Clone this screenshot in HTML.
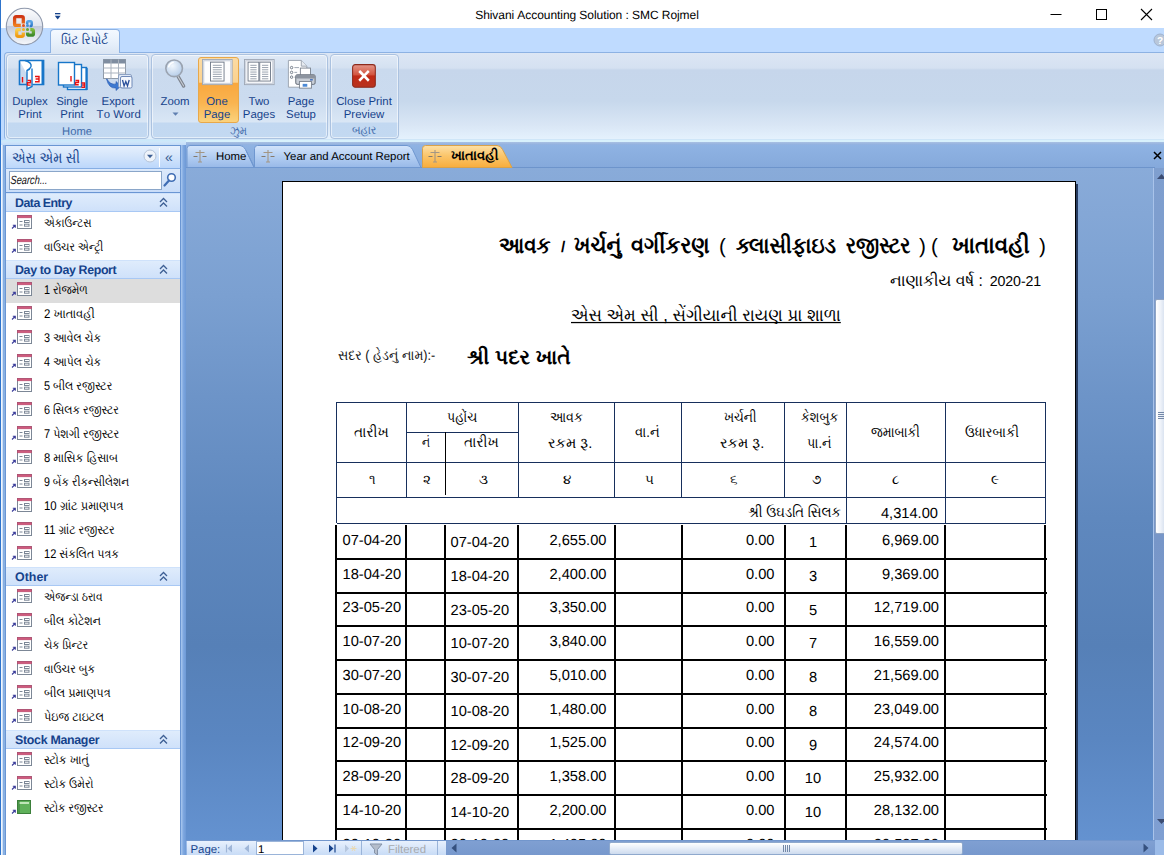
<!DOCTYPE html>
<html><head><meta charset="utf-8"><title>Shivani Accounting Solution : SMC Rojmel</title><style>
html,body{margin:0;padding:0;background:#fff;}
body{width:1164px;height:855px;overflow:hidden;font-family:"Liberation Sans",sans-serif;}
#root{position:relative;width:1164px;height:855px;overflow:hidden;background:#fff;text-rendering:geometricPrecision;}
#root div,#root svg{position:absolute;box-sizing:border-box;}
#root svg{overflow:visible;}
#root svg text{font-family:"Liberation Sans",sans-serif;}
</style></head><body><div id="root">
<div style="left:0px;top:0px;width:1164px;height:28px;background:#fff;"></div>
<div style="top:9.00px;font-size:12px;line-height:13.79px;color:#000;white-space:pre;left:475.20px;font-kerning:none;letter-spacing:-0.064px;">Shivani Accounting Solution : SMC Rojmel</div>
<svg style="left:1040px;top:0;width:124px;height:28px" viewBox="0 0 124 28"><path d="M10.500 14.500h11" stroke="#000" stroke-width="1" fill="none"/><rect x="56.5" y="9.5" width="10" height="10" stroke="#000" stroke-width="1" fill="none"/><path d="M101 9l11 11M112 9l-11 11" stroke="#000" stroke-width="1.1" fill="none"/></svg>
<div style="left:0px;top:28px;width:1164px;height:24px;background:#bfdbff;"></div>
<div style="left:0px;top:52px;width:1164px;height:92px;background:#bfdbff;"></div>
<div style="left:4px;top:52px;width:1164px;height:88px;border:1px solid #8db2e3;border-right:none;border-bottom-color:#cfe6f8;border-radius:4px 0 0 4px;background:linear-gradient(#dce6f4 0,#d5e1f1 15px,#c6d6eb 17px,#c7d8ec 48px,#d9e6f5 72px,#e6f3fe 88px);"></div>
<div style="left:0px;top:140px;width:186px;height:5px;background:linear-gradient(#c9e9fa 0,#cfe6fa 40%,#c3dcf8 100%);"></div>
<div style="left:186px;top:140px;width:978px;height:1.5px;background:#d8f1fc;"></div>
<div style="left:186px;top:141.5px;width:978px;height:3.5px;background:linear-gradient(#a9c0e2 0,#8fb0e0 100%);"></div>
<div style="left:0px;top:0px;width:1px;height:855px;background:#2e74cc;"></div>
<div style="left:50.3px;top:29.3px;width:69.3px;height:23.7px;border:1px solid #8db2e3;border-bottom:none;border-radius:4px 4px 0 0;background:linear-gradient(#f4f9ff 0,#e6effa 60%,#dbe6f4 100%);"></div>
<svg style="position:absolute;left:61.31px;top:30.47px;width:47.31px;height:20.40px;overflow:visible;fill:#15428b;" viewBox="0 0 47.31 20.40"><text x="0" y="14.03" font-size="12.75" textLength="47.31" lengthAdjust="spacingAndGlyphs">પ્રિંટ રિપોર્ટ</text></svg>
<svg style="left:1153px;top:33px;width:14px;height:14px" viewBox="0 0 14 14"><circle cx="7" cy="7" r="6" fill="#b9c7da" stroke="#9fb3cf"/><text x="4" y="11" font-size="10" font-weight="bold" fill="#fff" font-family="Liberation Sans">?</text></svg>
<svg style="left:54px;top:12px;width:8px;height:9px" viewBox="0 0 8 9"><rect x="1" y="1" width="5.4" height="1.3" fill="#15428b"/><path d="M0.8 3.8h5.8L3.7 7.4z" fill="#15428b"/></svg>
<svg style="left:5px;top:7px;width:40px;height:40px" viewBox="0 0 40 40">
<defs><radialGradient id="ob" cx="50%" cy="30%" r="75%"><stop offset="0" stop-color="#ffffff"/><stop offset="0.55" stop-color="#e4e8f0"/><stop offset="0.8" stop-color="#c3cbdb"/><stop offset="1" stop-color="#f4f6fa"/></radialGradient>
<linearGradient id="ob2" x1="0" y1="0" x2="0" y2="1"><stop offset="0" stop-color="#fdfdfe"/><stop offset="0.48" stop-color="#dfe4ee"/><stop offset="0.5" stop-color="#c2cadb"/><stop offset="1" stop-color="#f6f8fb"/></linearGradient></defs>
<circle cx="19.5" cy="19.5" r="18.2" fill="url(#ob2)" stroke="#8e98ab" stroke-width="1.1"/>
<defs><linearGradient id="lr" x1="0" y1="0" x2="0" y2="1"><stop offset="0" stop-color="#cf3614"/><stop offset="1" stop-color="#ef7d1c"/></linearGradient>
<linearGradient id="ly" x1="0" y1="0" x2="0" y2="1"><stop offset="0" stop-color="#fbd04a"/><stop offset="1" stop-color="#f09a12"/></linearGradient>
<linearGradient id="lg" x1="0" y1="0" x2="0" y2="1"><stop offset="0" stop-color="#7fbb3a"/><stop offset="1" stop-color="#3f8a2a"/></linearGradient>
<linearGradient id="lb" x1="0" y1="0" x2="0" y2="1"><stop offset="0" stop-color="#5aa6e6"/><stop offset="1" stop-color="#2f78c8"/></linearGradient></defs>
<g fill="none" stroke-linejoin="round" stroke-linecap="butt">
<path d="M18.300 16.500V11.200Q18.300 9.700 16.800 9.700H11.100Q9.600 9.700 9.600 11.200V16.900Q9.600 18.400 11.100 18.400H15.800" stroke="url(#lr)" stroke-width="3.300"/>
<path d="M22.200 17.200V15.600Q22.200 14.300 23.500 14.300H25.400Q26.700 14.300 26.700 15.600V17.700Q26.700 19 25.400 19H24.600" stroke="url(#lb)" stroke-width="2.500"/>
<path d="M15.800 22.600H13.200Q11.700 22.600 11.700 24.100V27.800Q11.700 29.300 13.200 29.300H16.800Q18.300 29.300 18.300 27.800V25.600" stroke="url(#ly)" stroke-width="3.300"/>
<path d="M25.300 22.600H26.900Q28.400 22.600 28.400 24.100V26.700Q28.400 28.200 26.900 28.200H24.100Q22.600 28.200 22.600 26.700V25.600" stroke="url(#lg)" stroke-width="3.300"/>
</g>
<circle cx="18.500" cy="18.400" r="1.500" fill="#e2521c"/><circle cx="22.500" cy="18.400" r="1.500" fill="#3f8fd8"/>
<circle cx="18.500" cy="22.500" r="1.500" fill="#f5b21c"/><circle cx="22.500" cy="22.500" r="1.500" fill="#67a82e"/>
</svg>
<div style="left:6px;top:54px;width:142.5px;height:85px;border:1px solid #abc2e0;border-radius:4px;background:linear-gradient(#dfe9f6 0,#d4e1f1 13px,#cadaee 14px,#cbdbef 45px,#d9e6f5 67px,#c2d8f1 68px,#c3d9f1 85px);box-shadow:inset 0 0 0 1px rgba(255,255,255,.55);"></div>
<div style="left:151px;top:54px;width:177px;height:85px;border:1px solid #abc2e0;border-radius:4px;background:linear-gradient(#dfe9f6 0,#d4e1f1 13px,#cadaee 14px,#cbdbef 45px,#d9e6f5 67px,#c2d8f1 68px,#c3d9f1 85px);box-shadow:inset 0 0 0 1px rgba(255,255,255,.55);"></div>
<div style="left:330px;top:54px;width:68.5px;height:85px;border:1px solid #abc2e0;border-radius:4px;background:linear-gradient(#dfe9f6 0,#d4e1f1 13px,#cadaee 14px,#cbdbef 45px,#d9e6f5 67px,#c2d8f1 68px,#c3d9f1 85px);box-shadow:inset 0 0 0 1px rgba(255,255,255,.55);"></div>
<div style="top:126.00px;font-size:11.2px;line-height:12.87px;color:#3e6aaa;white-space:pre;left:-123.00px;width:400px;text-align:center;">Home</div>
<svg style="position:absolute;left:230.34px;top:120.85px;width:16.95px;height:19.85px;overflow:visible;fill:#3e6aaa;" viewBox="0 0 16.95 19.85"><text x="0" y="13.65" font-size="12.41" textLength="16.95" lengthAdjust="spacingAndGlyphs">ઝુમ</text></svg>
<svg style="position:absolute;left:351.84px;top:121.26px;width:24.41px;height:19.25px;overflow:visible;fill:#3e6aaa;" viewBox="0 0 24.41 19.25"><text x="0" y="13.24" font-size="12.03" textLength="24.41" lengthAdjust="spacingAndGlyphs">બહાર</text></svg>
<div style="left:197.5px;top:56.5px;width:41.5px;height:66px;border:1px solid #e8a84a;border-radius:3px;background:linear-gradient(#fbdba4 0,#fcd28e 38%,#f9a73e 39%,#f9b450 70%,#fbd27c 100%);"></div>
<div style="top:96.00px;font-size:11.4px;line-height:13.10px;color:#15428b;white-space:pre;left:-170.00px;width:400px;text-align:center;">Duplex</div>
<div style="top:109.00px;font-size:11.4px;line-height:13.10px;color:#15428b;white-space:pre;left:-170.00px;width:400px;text-align:center;">Print</div>
<div style="top:96.00px;font-size:11.4px;line-height:13.10px;color:#15428b;white-space:pre;left:-128.00px;width:400px;text-align:center;">Single</div>
<div style="top:109.00px;font-size:11.4px;line-height:13.10px;color:#15428b;white-space:pre;left:-128.00px;width:400px;text-align:center;">Print</div>
<div style="top:96.00px;font-size:11.4px;line-height:13.10px;color:#15428b;white-space:pre;left:-82.00px;width:400px;text-align:center;">Export</div>
<div style="top:109.00px;font-size:11.4px;line-height:13.10px;color:#15428b;white-space:pre;left:96.60px;font-kerning:none;letter-spacing:0.082px;">To Word</div>
<div style="top:96.00px;font-size:11.4px;line-height:13.10px;color:#15428b;white-space:pre;left:-25.00px;width:400px;text-align:center;">Zoom</div>
<div style="top:96.00px;font-size:11.4px;line-height:13.10px;color:#15428b;white-space:pre;left:17.00px;width:400px;text-align:center;">One</div>
<div style="top:109.00px;font-size:11.4px;line-height:13.10px;color:#15428b;white-space:pre;left:17.00px;width:400px;text-align:center;">Page</div>
<div style="top:96.00px;font-size:11.4px;line-height:13.10px;color:#15428b;white-space:pre;left:59.00px;width:400px;text-align:center;">Two</div>
<div style="top:109.00px;font-size:11.4px;line-height:13.10px;color:#15428b;white-space:pre;left:59.00px;width:400px;text-align:center;">Pages</div>
<div style="top:96.00px;font-size:11.4px;line-height:13.10px;color:#15428b;white-space:pre;left:101.00px;width:400px;text-align:center;">Page</div>
<div style="top:109.00px;font-size:11.4px;line-height:13.10px;color:#15428b;white-space:pre;left:101.00px;width:400px;text-align:center;">Setup</div>
<div style="top:96.00px;font-size:11.4px;line-height:13.10px;color:#15428b;white-space:pre;left:164.00px;width:400px;text-align:center;">Close Print</div>
<div style="top:109.00px;font-size:11.4px;line-height:13.10px;color:#15428b;white-space:pre;left:164.00px;width:400px;text-align:center;">Preview</div>
<svg style="left:172px;top:112px;width:7px;height:4px" viewBox="0 0 7 4"><path d="M0.5 0.5h6L3.5 3.8z" fill="#5f7fb0"/></svg>
<svg style="left:17px;top:58px;width:30px;height:34px" viewBox="0 0 30 34">
<path d="M2.5 2.5h24v24h-11" fill="#fff" stroke="#1776c9" stroke-width="1.6"/>
<rect x="24.5" y="2" width="2.6" height="25" fill="#1776c9"/>
<path d="M2.5 2.5v24h7.5" fill="none" stroke="#1776c9" stroke-width="1.6"/>
<path d="M8 2.5q7 2 6 6q-1 3-4 4v18.5l5-2.5v-18" fill="#fff" stroke="#1776c9" stroke-width="1.4"/>
<g stroke="#e81212" stroke-width="1.4" fill="none"><path d="M5.5 19v5.5"/><path d="M10.5 22.5h3v2.2h-3v2.4h3.2"/><path d="M18 18.5h4v2.5h-3.4M22 21v2.8h-4"/></g>
</svg>
<svg style="left:57px;top:59.500px;width:32px;height:32px" viewBox="0 0 32 32">
<rect x="10.5" y="7.5" width="19" height="22" fill="#fff" stroke="#1776c9" stroke-width="1.4"/><rect x="28.5" y="8" width="2.2" height="22" fill="#1776c9"/>
<rect x="6.5" y="4.5" width="18" height="22.5" fill="#fff" stroke="#1776c9" stroke-width="1.4"/>
<rect x="1.5" y="2.5" width="16" height="22.5" fill="#fff" stroke="#1776c9" stroke-width="1.4"/>
<g stroke="#e81212" stroke-width="1.4" fill="none"><path d="M14 16v5.5"/><path d="M18.5 20.5h3v2h-3v2.2h3.2"/><path d="M24.5 23h3v2h-2.4M27.5 25v2.2h-3"/></g>
</svg>
<svg style="left:102px;top:58px;width:34px;height:34px" viewBox="0 0 34 34">
<rect x="1.5" y="1.5" width="22" height="19" fill="#fff" stroke="#8f9aa8" stroke-width="1"/>
<rect x="1.5" y="1.5" width="22" height="4" fill="#7f8da0"/>
<path d="M1.5 10h22M1.5 15h22M9 1.5v19M16.5 1.5v19" stroke="#aab3bf" stroke-width="1"/>
<path d="M5 21q3 6 9 5v-2.5l5 4.5l-5 4.500v-2.500q-7 1-9.500-9z" fill="#3c78d0" stroke="#2a5bb0" stroke-width=".6"/>
<rect x="16.500" y="16.500" width="13" height="13" rx="1.500" fill="#dfe8f6" stroke="#8da2c4" stroke-width="1"/>
<rect x="18.500" y="18.500" width="11.500" height="11.500" rx="1.500" fill="#f4f7fc" stroke="#6f89b8" stroke-width="1"/>
<path d="M20.500 22l1.600 6l1.700-4.500l1.700 4.500l1.700-6" stroke="#2a4f9a" stroke-width="1.300" fill="none"/>
</svg>
<svg style="left:162px;top:57px;width:26px;height:33px" viewBox="0 0 30 38">
<defs><radialGradient id="zg" cx="40%" cy="35%" r="70%"><stop offset="0" stop-color="#f1f7fd"/><stop offset="1" stop-color="#b3cbe8"/></radialGradient></defs>
<path d="M18 21.500l7 12" stroke="#7d838d" stroke-width="3.800" stroke-linecap="round"/>
<path d="M18 21.500l7 12" stroke="#c9ced6" stroke-width="1.200" stroke-linecap="round"/>
<circle cx="14" cy="13" r="9.600" fill="url(#zg)" stroke="#9aa3b0" stroke-width="1.800"/>
<path d="M7.500 12q1-5 6-6" stroke="#fff" stroke-width="1.600" fill="none"/>
</svg>
<svg style="left:202px;top:59px;width:30.600px;height:27px" viewBox="0 0 34 30">
<rect x="0.500" y="0.500" width="33" height="28" fill="#e9edf3" stroke="#9da6b4"/>
<rect x="2" y="2" width="30" height="25" fill="#fdfdfe" stroke="#c3cad6"/>
<rect x="9.500" y="3.500" width="15" height="21" fill="#fff" stroke="#6c7686"/>
<path d="M12 7h10M12 9.500h10M12 12h10M12 14.500h10M12 17h10M12 19.500h10M12 22h10" stroke="#8f98a6" stroke-width="1"/>
</svg>
<svg style="left:244px;top:59px;width:30.600px;height:27px" viewBox="0 0 34 30">
<rect x="0.500" y="0.500" width="33" height="28" fill="#e9edf3" stroke="#9da6b4"/>
<rect x="2" y="2" width="30" height="25" fill="#fdfdfe" stroke="#c3cad6"/>
<rect x="4.500" y="3.500" width="12" height="21" fill="#fff" stroke="#6c7686"/>
<rect x="17.500" y="3.500" width="12" height="21" fill="#fff" stroke="#6c7686"/>
<path d="M7 7h7M7 9.500h7M7 12h7M7 14.500h7M7 17h7M7 19.500h7M7 22h7M20 7h7M20 9.500h7M20 12h7M20 14.500h7M20 17h7M20 19.500h7M20 22h7" stroke="#8f98a6" stroke-width="1"/>
</svg>
<svg style="left:286.500px;top:59px;width:29.500px;height:32.500px" viewBox="0 0 32 34" preserveAspectRatio="none">
<path d="M1.500 1.500h14l6 6v22h-20z" fill="#fff" stroke="#9aa2ae"/>
<path d="M15.500 1.500v6h6" fill="#e6eaf0" stroke="#9aa2ae"/>
<circle cx="5" cy="9" r="1.300" fill="none" stroke="#6d7683"/><circle cx="5" cy="14" r="1.300" fill="none" stroke="#6d7683"/><circle cx="5" cy="19" r="1.300" fill="none" stroke="#6d7683"/>
<path d="M8 9h5M8 14h3M8 19h2" stroke="#9aa2ae"/>
<rect x="14.500" y="9.500" width="11" height="8" fill="#fff" stroke="#7d8591"/>
<rect x="9.500" y="16.500" width="21" height="10" rx="1.500" fill="#c9ced6" stroke="#5f6671"/>
<rect x="9.500" y="16.500" width="21" height="4" rx="1.500" fill="#8d949f"/>
<rect x="13.500" y="23.500" width="13" height="7" fill="#fff" stroke="#7d8591"/>
<rect x="17" y="26" width="5" height="3" fill="#4c8ad6"/>
<rect x="25" y="21" width="3" height="1.500" fill="#3f6fc0"/>
</svg>
<svg style="left:352px;top:64px;width:24px;height:24px" viewBox="0 0 28 26" preserveAspectRatio="none">
<defs><linearGradient id="cx" x1="0" y1="0" x2="0" y2="1"><stop offset="0" stop-color="#e4978a"/><stop offset="0.45" stop-color="#d3543f"/><stop offset="0.5" stop-color="#c12a16"/><stop offset="1" stop-color="#b8331f"/></linearGradient></defs>
<rect x="0.700" y="0.700" width="26.500" height="24.500" rx="3" fill="url(#cx)" stroke="#8c2a1c" stroke-width="1.200"/>
<path d="M9.500 8.500l9 8.500M18.500 8.500l-9 8.500" stroke="#fff" stroke-width="3" stroke-linecap="square"/>
</svg>
<div style="left:1px;top:145px;width:4px;height:710px;background:linear-gradient(90deg,#ffffff 0,#d5e4f8 35%,#6f9fdb 70%,#9dbfea 100%);"></div>
<div style="left:5px;top:145px;width:176px;height:710px;background:#fff;border-left:1px solid #6a96d3;border-right:1px solid #6a96d3;"></div>
<div style="left:181px;top:145px;width:5px;height:710px;background:linear-gradient(90deg,#a9c8f0 0,#7ea7df 50%,#6d99d6 100%);"></div>
<div style="left:5px;top:145px;width:176px;height:24px;border:1px solid #6a96d3;border-bottom:1px solid #86aee4;background:linear-gradient(#e6f0fd 0,#d4e5fb 45%,#bcd7fb 100%);"></div>
<svg style="position:absolute;left:11.86px;top:144.94px;width:67.91px;height:25.54px;overflow:visible;fill:#15428b;" viewBox="0 0 67.91 25.54"><text x="0" y="17.56" font-size="15.96" textLength="67.91" lengthAdjust="spacingAndGlyphs">એસ એમ સી</text></svg>
<svg style="left:143px;top:149px;width:14px;height:14px" viewBox="0 0 14 14"><circle cx="7" cy="7" r="6" fill="#eef3fa" stroke="#b4c3d8"/><path d="M4 5.700h6L7 9.300z" fill="#3d5f94"/></svg>
<div style="left:159px;top:148px;width:1px;height:19px;background:#fff;"></div>
<div style="top:149.00px;font-size:14px;line-height:16.09px;color:#3d5f94;white-space:pre;left:165.00px;">«</div>
<div style="left:6px;top:169px;width:174px;height:23px;background:linear-gradient(#dce9fb 0,#c9ddf8 100%);"></div>
<div style="left:8.5px;top:171px;width:153px;height:18.5px;background:#fff;border:1px solid #8aa6c9;"></div>
<div style="top:174.00px;font-size:12px;line-height:13.79px;color:#111;white-space:pre;font-style:italic;left:10.00px;font-kerning:none;transform-origin:0 100%;transform:scaleX(0.7746) skewX(-4deg);">Search...</div>
<svg style="left:163px;top:172px;width:14px;height:16px" viewBox="0 0 14 16"><circle cx="8.500" cy="5.500" r="3.800" fill="#fff" stroke="#3f6db4" stroke-width="1.600"/><path d="M6 8.500L1.500 13.500" stroke="#3f6db4" stroke-width="2.200" stroke-linecap="round"/></svg>
<div style="left:5px;top:192px;width:176px;height:1px;background:#6a96d3;"></div>
<div style="left:6px;top:193px;width:174px;height:19px;border-bottom:1px solid #a8c8f4;border-top:1px solid #cfe2fb;background:linear-gradient(#dfecfc 0,#cfe1fa 100%);"></div>
<div style="top:196.00px;font-size:12.4px;line-height:14.25px;color:#15428b;white-space:pre;font-weight:bold;left:15.00px;font-kerning:none;letter-spacing:-0.502px;">Data Entry</div>
<svg style="left:159px;top:197px;width:9px;height:11px" viewBox="0 0 9 11"><path d="M1 5l3.500-3.500L8 5M1 9.500l3.500-3.500L8 9.500" fill="none" stroke="#3d5f94" stroke-width="1.300"/></svg>
<svg style="left:11px;top:214.2px;width:22px;height:16px" viewBox="0 0 22 16"><rect x="6.500" y="1.500" width="14" height="13" fill="#fff" stroke="#7c8796"/><rect x="6.500" y="1.500" width="14" height="2.300" fill="#cf5a7c" stroke="#b8456a" stroke-width=".6"/><path d="M8.500 7.500h3M8.500 11h3" stroke="#7c8796"/><rect x="13.500" y="6.500" width="4.500" height="2" fill="none" stroke="#7c8796"/><rect x="13.500" y="10.200" width="4.500" height="2" fill="none" stroke="#7c8796"/><path d="M1 14.500l3-3M1.800 11.200h2.500v2.500" stroke="#3b3d9a" stroke-width="1.100" fill="none"/></svg>
<svg style="position:absolute;left:44.20px;top:213.14px;width:47.41px;height:20.16px;overflow:visible;fill:#000;" viewBox="0 0 47.41 20.16"><text x="0" y="13.86" font-size="12.6" textLength="47.41" lengthAdjust="spacingAndGlyphs">એકાઉન્ટસ</text></svg>
<svg style="left:11px;top:238.2px;width:22px;height:16px" viewBox="0 0 22 16"><rect x="6.500" y="1.500" width="14" height="13" fill="#fff" stroke="#7c8796"/><rect x="6.500" y="1.500" width="14" height="2.300" fill="#cf5a7c" stroke="#b8456a" stroke-width=".6"/><path d="M8.500 7.500h3M8.500 11h3" stroke="#7c8796"/><rect x="13.500" y="6.500" width="4.500" height="2" fill="none" stroke="#7c8796"/><rect x="13.500" y="10.200" width="4.500" height="2" fill="none" stroke="#7c8796"/><path d="M1 14.500l3-3M1.800 11.200h2.500v2.500" stroke="#3b3d9a" stroke-width="1.100" fill="none"/></svg>
<svg style="position:absolute;left:44.20px;top:237.14px;width:59.33px;height:20.16px;overflow:visible;fill:#000;" viewBox="0 0 59.33 20.16"><text x="0" y="13.86" font-size="12.6" textLength="59.33" lengthAdjust="spacingAndGlyphs">વાઉચર એન્ટ્રી</text></svg>
<div style="left:6px;top:260px;width:174px;height:19px;border-bottom:1px solid #a8c8f4;border-top:1px solid #cfe2fb;background:linear-gradient(#dfecfc 0,#cfe1fa 100%);"></div>
<div style="top:263.00px;font-size:12.4px;line-height:14.25px;color:#15428b;white-space:pre;font-weight:bold;left:15.00px;font-kerning:none;letter-spacing:-0.356px;">Day to Day Report</div>
<svg style="left:159px;top:264px;width:9px;height:11px" viewBox="0 0 9 11"><path d="M1 5l3.500-3.500L8 5M1 9.500l3.500-3.500L8 9.500" fill="none" stroke="#3d5f94" stroke-width="1.300"/></svg>
<div style="left:6px;top:279px;width:174px;height:24px;background:#dddddd;"></div>
<svg style="left:11px;top:280.6px;width:22px;height:16px" viewBox="0 0 22 16"><rect x="6.500" y="1.500" width="14" height="13" fill="#fff" stroke="#7c8796"/><rect x="6.500" y="1.500" width="14" height="2.300" fill="#cf5a7c" stroke="#b8456a" stroke-width=".6"/><path d="M8.500 7.500h3M8.500 11h3" stroke="#7c8796"/><rect x="13.500" y="6.500" width="4.500" height="2" fill="none" stroke="#7c8796"/><rect x="13.500" y="10.200" width="4.500" height="2" fill="none" stroke="#7c8796"/><path d="M1 14.500l3-3M1.800 11.200h2.500v2.500" stroke="#3b3d9a" stroke-width="1.100" fill="none"/></svg>
<svg style="position:absolute;left:44.20px;top:279.54px;width:43.79px;height:20.16px;overflow:visible;fill:#000;" viewBox="0 0 43.79 20.16"><text x="0" y="13.86" font-size="12.6" textLength="43.79" lengthAdjust="spacingAndGlyphs">1 રોજમેળ</text></svg>
<svg style="left:11px;top:304.6px;width:22px;height:16px" viewBox="0 0 22 16"><rect x="6.500" y="1.500" width="14" height="13" fill="#fff" stroke="#7c8796"/><rect x="6.500" y="1.500" width="14" height="2.300" fill="#cf5a7c" stroke="#b8456a" stroke-width=".6"/><path d="M8.500 7.500h3M8.500 11h3" stroke="#7c8796"/><rect x="13.500" y="6.500" width="4.500" height="2" fill="none" stroke="#7c8796"/><rect x="13.500" y="10.200" width="4.500" height="2" fill="none" stroke="#7c8796"/><path d="M1 14.500l3-3M1.800 11.200h2.500v2.500" stroke="#3b3d9a" stroke-width="1.100" fill="none"/></svg>
<svg style="position:absolute;left:44.20px;top:303.54px;width:50.66px;height:20.16px;overflow:visible;fill:#000;" viewBox="0 0 50.66 20.16"><text x="0" y="13.86" font-size="12.6" textLength="50.66" lengthAdjust="spacingAndGlyphs">2 ખાતાવહી</text></svg>
<svg style="left:11px;top:328.6px;width:22px;height:16px" viewBox="0 0 22 16"><rect x="6.500" y="1.500" width="14" height="13" fill="#fff" stroke="#7c8796"/><rect x="6.500" y="1.500" width="14" height="2.300" fill="#cf5a7c" stroke="#b8456a" stroke-width=".6"/><path d="M8.500 7.500h3M8.500 11h3" stroke="#7c8796"/><rect x="13.500" y="6.500" width="4.500" height="2" fill="none" stroke="#7c8796"/><rect x="13.500" y="10.200" width="4.500" height="2" fill="none" stroke="#7c8796"/><path d="M1 14.500l3-3M1.800 11.200h2.500v2.500" stroke="#3b3d9a" stroke-width="1.100" fill="none"/></svg>
<svg style="position:absolute;left:44.20px;top:327.54px;width:57.15px;height:20.16px;overflow:visible;fill:#000;" viewBox="0 0 57.15 20.16"><text x="0" y="13.86" font-size="12.6" textLength="57.15" lengthAdjust="spacingAndGlyphs">3 આવેલ ચેક</text></svg>
<svg style="left:11px;top:352.6px;width:22px;height:16px" viewBox="0 0 22 16"><rect x="6.500" y="1.500" width="14" height="13" fill="#fff" stroke="#7c8796"/><rect x="6.500" y="1.500" width="14" height="2.300" fill="#cf5a7c" stroke="#b8456a" stroke-width=".6"/><path d="M8.500 7.500h3M8.500 11h3" stroke="#7c8796"/><rect x="13.500" y="6.500" width="4.500" height="2" fill="none" stroke="#7c8796"/><rect x="13.500" y="10.200" width="4.500" height="2" fill="none" stroke="#7c8796"/><path d="M1 14.500l3-3M1.800 11.200h2.500v2.500" stroke="#3b3d9a" stroke-width="1.100" fill="none"/></svg>
<svg style="position:absolute;left:44.20px;top:351.54px;width:57.15px;height:20.16px;overflow:visible;fill:#000;" viewBox="0 0 57.15 20.16"><text x="0" y="13.86" font-size="12.6" textLength="57.15" lengthAdjust="spacingAndGlyphs">4 આપેલ ચેક</text></svg>
<svg style="left:11px;top:376.6px;width:22px;height:16px" viewBox="0 0 22 16"><rect x="6.500" y="1.500" width="14" height="13" fill="#fff" stroke="#7c8796"/><rect x="6.500" y="1.500" width="14" height="2.300" fill="#cf5a7c" stroke="#b8456a" stroke-width=".6"/><path d="M8.500 7.500h3M8.500 11h3" stroke="#7c8796"/><rect x="13.500" y="6.500" width="4.500" height="2" fill="none" stroke="#7c8796"/><rect x="13.500" y="10.200" width="4.500" height="2" fill="none" stroke="#7c8796"/><path d="M1 14.500l3-3M1.800 11.200h2.500v2.500" stroke="#3b3d9a" stroke-width="1.100" fill="none"/></svg>
<svg style="position:absolute;left:44.20px;top:375.54px;width:68.34px;height:20.16px;overflow:visible;fill:#000;" viewBox="0 0 68.34 20.16"><text x="0" y="13.86" font-size="12.6" textLength="68.34" lengthAdjust="spacingAndGlyphs">5 બીલ રજીસ્ટર</text></svg>
<svg style="left:11px;top:400.6px;width:22px;height:16px" viewBox="0 0 22 16"><rect x="6.500" y="1.500" width="14" height="13" fill="#fff" stroke="#7c8796"/><rect x="6.500" y="1.500" width="14" height="2.300" fill="#cf5a7c" stroke="#b8456a" stroke-width=".6"/><path d="M8.500 7.500h3M8.500 11h3" stroke="#7c8796"/><rect x="13.500" y="6.500" width="4.500" height="2" fill="none" stroke="#7c8796"/><rect x="13.500" y="10.200" width="4.500" height="2" fill="none" stroke="#7c8796"/><path d="M1 14.500l3-3M1.800 11.200h2.500v2.500" stroke="#3b3d9a" stroke-width="1.100" fill="none"/></svg>
<svg style="position:absolute;left:44.20px;top:399.54px;width:74.83px;height:20.16px;overflow:visible;fill:#000;" viewBox="0 0 74.83 20.16"><text x="0" y="13.86" font-size="12.6" textLength="74.83" lengthAdjust="spacingAndGlyphs">6 સિલક રજીસ્ટર</text></svg>
<svg style="left:11px;top:424.6px;width:22px;height:16px" viewBox="0 0 22 16"><rect x="6.500" y="1.500" width="14" height="13" fill="#fff" stroke="#7c8796"/><rect x="6.500" y="1.500" width="14" height="2.300" fill="#cf5a7c" stroke="#b8456a" stroke-width=".6"/><path d="M8.500 7.500h3M8.500 11h3" stroke="#7c8796"/><rect x="13.500" y="6.500" width="4.500" height="2" fill="none" stroke="#7c8796"/><rect x="13.500" y="10.200" width="4.500" height="2" fill="none" stroke="#7c8796"/><path d="M1 14.500l3-3M1.800 11.200h2.500v2.500" stroke="#3b3d9a" stroke-width="1.100" fill="none"/></svg>
<svg style="position:absolute;left:44.20px;top:423.54px;width:75.32px;height:20.16px;overflow:visible;fill:#000;" viewBox="0 0 75.32 20.16"><text x="0" y="13.86" font-size="12.6" textLength="75.32" lengthAdjust="spacingAndGlyphs">7 પેશગી રજીસ્ટર</text></svg>
<svg style="left:11px;top:448.6px;width:22px;height:16px" viewBox="0 0 22 16"><rect x="6.500" y="1.500" width="14" height="13" fill="#fff" stroke="#7c8796"/><rect x="6.500" y="1.500" width="14" height="2.300" fill="#cf5a7c" stroke="#b8456a" stroke-width=".6"/><path d="M8.500 7.500h3M8.500 11h3" stroke="#7c8796"/><rect x="13.500" y="6.500" width="4.500" height="2" fill="none" stroke="#7c8796"/><rect x="13.500" y="10.200" width="4.500" height="2" fill="none" stroke="#7c8796"/><path d="M1 14.500l3-3M1.800 11.200h2.500v2.500" stroke="#3b3d9a" stroke-width="1.100" fill="none"/></svg>
<svg style="position:absolute;left:44.20px;top:447.54px;width:73.98px;height:20.16px;overflow:visible;fill:#000;" viewBox="0 0 73.98 20.16"><text x="0" y="13.86" font-size="12.6" textLength="73.98" lengthAdjust="spacingAndGlyphs">8 માસિક હિસાબ</text></svg>
<svg style="left:11px;top:472.6px;width:22px;height:16px" viewBox="0 0 22 16"><rect x="6.500" y="1.500" width="14" height="13" fill="#fff" stroke="#7c8796"/><rect x="6.500" y="1.500" width="14" height="2.300" fill="#cf5a7c" stroke="#b8456a" stroke-width=".6"/><path d="M8.500 7.500h3M8.500 11h3" stroke="#7c8796"/><rect x="13.500" y="6.500" width="4.500" height="2" fill="none" stroke="#7c8796"/><rect x="13.500" y="10.200" width="4.500" height="2" fill="none" stroke="#7c8796"/><path d="M1 14.500l3-3M1.800 11.200h2.500v2.500" stroke="#3b3d9a" stroke-width="1.100" fill="none"/></svg>
<svg style="position:absolute;left:44.20px;top:471.54px;width:85.12px;height:20.16px;overflow:visible;fill:#000;" viewBox="0 0 85.12 20.16"><text x="0" y="13.86" font-size="12.6" textLength="85.12" lengthAdjust="spacingAndGlyphs">9 બેંક રીકન્સીલેશન</text></svg>
<svg style="left:11px;top:496.6px;width:22px;height:16px" viewBox="0 0 22 16"><rect x="6.500" y="1.500" width="14" height="13" fill="#fff" stroke="#7c8796"/><rect x="6.500" y="1.500" width="14" height="2.300" fill="#cf5a7c" stroke="#b8456a" stroke-width=".6"/><path d="M8.500 7.500h3M8.500 11h3" stroke="#7c8796"/><rect x="13.500" y="6.500" width="4.500" height="2" fill="none" stroke="#7c8796"/><rect x="13.500" y="10.200" width="4.500" height="2" fill="none" stroke="#7c8796"/><path d="M1 14.500l3-3M1.800 11.200h2.500v2.500" stroke="#3b3d9a" stroke-width="1.100" fill="none"/></svg>
<svg style="position:absolute;left:44.20px;top:495.54px;width:79.51px;height:20.16px;overflow:visible;fill:#000;" viewBox="0 0 79.51 20.16"><text x="0" y="13.86" font-size="12.6" textLength="79.51" lengthAdjust="spacingAndGlyphs">10 ગ્રાંટ પ્રમાણપત્ર</text></svg>
<svg style="left:11px;top:520.6px;width:22px;height:16px" viewBox="0 0 22 16"><rect x="6.500" y="1.500" width="14" height="13" fill="#fff" stroke="#7c8796"/><rect x="6.500" y="1.500" width="14" height="2.300" fill="#cf5a7c" stroke="#b8456a" stroke-width=".6"/><path d="M8.500 7.500h3M8.500 11h3" stroke="#7c8796"/><rect x="13.500" y="6.500" width="4.500" height="2" fill="none" stroke="#7c8796"/><rect x="13.500" y="10.200" width="4.500" height="2" fill="none" stroke="#7c8796"/><path d="M1 14.500l3-3M1.800 11.200h2.500v2.500" stroke="#3b3d9a" stroke-width="1.100" fill="none"/></svg>
<svg style="position:absolute;left:44.20px;top:519.54px;width:70.80px;height:20.16px;overflow:visible;fill:#000;" viewBox="0 0 70.80 20.16"><text x="0" y="13.86" font-size="12.6" textLength="70.80" lengthAdjust="spacingAndGlyphs">11 ગ્રાંટ રજીસ્ટર</text></svg>
<svg style="left:11px;top:544.6px;width:22px;height:16px" viewBox="0 0 22 16"><rect x="6.500" y="1.500" width="14" height="13" fill="#fff" stroke="#7c8796"/><rect x="6.500" y="1.500" width="14" height="2.300" fill="#cf5a7c" stroke="#b8456a" stroke-width=".6"/><path d="M8.500 7.500h3M8.500 11h3" stroke="#7c8796"/><rect x="13.500" y="6.500" width="4.500" height="2" fill="none" stroke="#7c8796"/><rect x="13.500" y="10.200" width="4.500" height="2" fill="none" stroke="#7c8796"/><path d="M1 14.500l3-3M1.800 11.200h2.500v2.500" stroke="#3b3d9a" stroke-width="1.100" fill="none"/></svg>
<svg style="position:absolute;left:44.20px;top:543.54px;width:75.01px;height:20.16px;overflow:visible;fill:#000;" viewBox="0 0 75.01 20.16"><text x="0" y="13.86" font-size="12.6" textLength="75.01" lengthAdjust="spacingAndGlyphs">12 સંકલિત પત્રક</text></svg>
<div style="left:6px;top:567px;width:174px;height:19px;border-bottom:1px solid #a8c8f4;border-top:1px solid #cfe2fb;background:linear-gradient(#dfecfc 0,#cfe1fa 100%);"></div>
<div style="top:570.00px;font-size:12.4px;line-height:14.25px;color:#15428b;white-space:pre;font-weight:bold;left:15.00px;font-kerning:none;letter-spacing:0.032px;">Other</div>
<svg style="left:159px;top:571px;width:9px;height:11px" viewBox="0 0 9 11"><path d="M1 5l3.500-3.500L8 5M1 9.500l3.500-3.500L8 9.500" fill="none" stroke="#3d5f94" stroke-width="1.300"/></svg>
<svg style="left:11px;top:587.6px;width:22px;height:16px" viewBox="0 0 22 16"><rect x="6.500" y="1.500" width="14" height="13" fill="#fff" stroke="#7c8796"/><rect x="6.500" y="1.500" width="14" height="2.300" fill="#cf5a7c" stroke="#b8456a" stroke-width=".6"/><path d="M8.500 7.500h3M8.500 11h3" stroke="#7c8796"/><rect x="13.500" y="6.500" width="4.500" height="2" fill="none" stroke="#7c8796"/><rect x="13.500" y="10.200" width="4.500" height="2" fill="none" stroke="#7c8796"/><path d="M1 14.500l3-3M1.800 11.200h2.500v2.500" stroke="#3b3d9a" stroke-width="1.100" fill="none"/></svg>
<svg style="position:absolute;left:44.20px;top:586.54px;width:58.55px;height:20.16px;overflow:visible;fill:#000;" viewBox="0 0 58.55 20.16"><text x="0" y="13.86" font-size="12.6" textLength="58.55" lengthAdjust="spacingAndGlyphs">એજન્ડા ઠરાવ</text></svg>
<svg style="left:11px;top:611.6px;width:22px;height:16px" viewBox="0 0 22 16"><rect x="6.500" y="1.500" width="14" height="13" fill="#fff" stroke="#7c8796"/><rect x="6.500" y="1.500" width="14" height="2.300" fill="#cf5a7c" stroke="#b8456a" stroke-width=".6"/><path d="M8.500 7.500h3M8.500 11h3" stroke="#7c8796"/><rect x="13.500" y="6.500" width="4.500" height="2" fill="none" stroke="#7c8796"/><rect x="13.500" y="10.200" width="4.500" height="2" fill="none" stroke="#7c8796"/><path d="M1 14.500l3-3M1.800 11.200h2.500v2.500" stroke="#3b3d9a" stroke-width="1.100" fill="none"/></svg>
<svg style="position:absolute;left:44.20px;top:610.54px;width:57.07px;height:20.16px;overflow:visible;fill:#000;" viewBox="0 0 57.07 20.16"><text x="0" y="13.86" font-size="12.6" textLength="57.07" lengthAdjust="spacingAndGlyphs">બીલ કોટેશન</text></svg>
<svg style="left:11px;top:635.6px;width:22px;height:16px" viewBox="0 0 22 16"><rect x="6.500" y="1.500" width="14" height="13" fill="#fff" stroke="#7c8796"/><rect x="6.500" y="1.500" width="14" height="2.300" fill="#cf5a7c" stroke="#b8456a" stroke-width=".6"/><path d="M8.500 7.500h3M8.500 11h3" stroke="#7c8796"/><rect x="13.500" y="6.500" width="4.500" height="2" fill="none" stroke="#7c8796"/><rect x="13.500" y="10.200" width="4.500" height="2" fill="none" stroke="#7c8796"/><path d="M1 14.500l3-3M1.800 11.200h2.500v2.500" stroke="#3b3d9a" stroke-width="1.100" fill="none"/></svg>
<svg style="position:absolute;left:44.20px;top:634.54px;width:44.10px;height:20.16px;overflow:visible;fill:#000;" viewBox="0 0 44.10 20.16"><text x="0" y="13.86" font-size="12.6" textLength="44.10" lengthAdjust="spacingAndGlyphs">ચેક પ્રિન્ટર</text></svg>
<svg style="left:11px;top:659.6px;width:22px;height:16px" viewBox="0 0 22 16"><rect x="6.500" y="1.500" width="14" height="13" fill="#fff" stroke="#7c8796"/><rect x="6.500" y="1.500" width="14" height="2.300" fill="#cf5a7c" stroke="#b8456a" stroke-width=".6"/><path d="M8.500 7.500h3M8.500 11h3" stroke="#7c8796"/><rect x="13.500" y="6.500" width="4.500" height="2" fill="none" stroke="#7c8796"/><rect x="13.500" y="10.200" width="4.500" height="2" fill="none" stroke="#7c8796"/><path d="M1 14.500l3-3M1.800 11.200h2.500v2.500" stroke="#3b3d9a" stroke-width="1.100" fill="none"/></svg>
<svg style="position:absolute;left:44.20px;top:658.54px;width:51.09px;height:20.16px;overflow:visible;fill:#000;" viewBox="0 0 51.09 20.16"><text x="0" y="13.86" font-size="12.6" textLength="51.09" lengthAdjust="spacingAndGlyphs">વાઉચર બુક</text></svg>
<svg style="left:11px;top:683.6px;width:22px;height:16px" viewBox="0 0 22 16"><rect x="6.500" y="1.500" width="14" height="13" fill="#fff" stroke="#7c8796"/><rect x="6.500" y="1.500" width="14" height="2.300" fill="#cf5a7c" stroke="#b8456a" stroke-width=".6"/><path d="M8.500 7.500h3M8.500 11h3" stroke="#7c8796"/><rect x="13.500" y="6.500" width="4.500" height="2" fill="none" stroke="#7c8796"/><rect x="13.500" y="10.200" width="4.500" height="2" fill="none" stroke="#7c8796"/><path d="M1 14.500l3-3M1.800 11.200h2.500v2.500" stroke="#3b3d9a" stroke-width="1.100" fill="none"/></svg>
<svg style="position:absolute;left:44.20px;top:682.54px;width:66.74px;height:20.16px;overflow:visible;fill:#000;" viewBox="0 0 66.74 20.16"><text x="0" y="13.86" font-size="12.6" textLength="66.74" lengthAdjust="spacingAndGlyphs">બીલ પ્રમાણપત્ર</text></svg>
<svg style="left:11px;top:707.6px;width:22px;height:16px" viewBox="0 0 22 16"><rect x="6.500" y="1.500" width="14" height="13" fill="#fff" stroke="#7c8796"/><rect x="6.500" y="1.500" width="14" height="2.300" fill="#cf5a7c" stroke="#b8456a" stroke-width=".6"/><path d="M8.500 7.500h3M8.500 11h3" stroke="#7c8796"/><rect x="13.500" y="6.500" width="4.500" height="2" fill="none" stroke="#7c8796"/><rect x="13.500" y="10.200" width="4.500" height="2" fill="none" stroke="#7c8796"/><path d="M1 14.500l3-3M1.800 11.200h2.500v2.500" stroke="#3b3d9a" stroke-width="1.100" fill="none"/></svg>
<svg style="position:absolute;left:44.20px;top:706.54px;width:59.96px;height:20.16px;overflow:visible;fill:#000;" viewBox="0 0 59.96 20.16"><text x="0" y="13.86" font-size="12.6" textLength="59.96" lengthAdjust="spacingAndGlyphs">પેઇજ ટાઇટલ</text></svg>
<div style="left:6px;top:730px;width:174px;height:19px;border-bottom:1px solid #a8c8f4;border-top:1px solid #cfe2fb;background:linear-gradient(#dfecfc 0,#cfe1fa 100%);"></div>
<div style="top:733.00px;font-size:12.4px;line-height:14.25px;color:#15428b;white-space:pre;font-weight:bold;left:15.00px;font-kerning:none;letter-spacing:-0.300px;">Stock Manager</div>
<svg style="left:159px;top:734px;width:9px;height:11px" viewBox="0 0 9 11"><path d="M1 5l3.500-3.500L8 5M1 9.500l3.500-3.500L8 9.500" fill="none" stroke="#3d5f94" stroke-width="1.300"/></svg>
<svg style="left:11px;top:750.6px;width:22px;height:16px" viewBox="0 0 22 16"><rect x="6.500" y="1.500" width="14" height="13" fill="#fff" stroke="#7c8796"/><rect x="6.500" y="1.500" width="14" height="2.300" fill="#cf5a7c" stroke="#b8456a" stroke-width=".6"/><path d="M8.500 7.500h3M8.500 11h3" stroke="#7c8796"/><rect x="13.500" y="6.500" width="4.500" height="2" fill="none" stroke="#7c8796"/><rect x="13.500" y="10.200" width="4.500" height="2" fill="none" stroke="#7c8796"/><path d="M1 14.500l3-3M1.800 11.200h2.500v2.500" stroke="#3b3d9a" stroke-width="1.100" fill="none"/></svg>
<svg style="position:absolute;left:44.20px;top:749.54px;width:44.92px;height:20.16px;overflow:visible;fill:#000;" viewBox="0 0 44.92 20.16"><text x="0" y="13.86" font-size="12.6" textLength="44.92" lengthAdjust="spacingAndGlyphs">સ્ટોક ખાતું</text></svg>
<svg style="left:11px;top:774.6px;width:22px;height:16px" viewBox="0 0 22 16"><rect x="6.500" y="1.500" width="14" height="13" fill="#fff" stroke="#7c8796"/><rect x="6.500" y="1.500" width="14" height="2.300" fill="#cf5a7c" stroke="#b8456a" stroke-width=".6"/><path d="M8.500 7.500h3M8.500 11h3" stroke="#7c8796"/><rect x="13.500" y="6.500" width="4.500" height="2" fill="none" stroke="#7c8796"/><rect x="13.500" y="10.200" width="4.500" height="2" fill="none" stroke="#7c8796"/><path d="M1 14.500l3-3M1.800 11.200h2.500v2.500" stroke="#3b3d9a" stroke-width="1.100" fill="none"/></svg>
<svg style="position:absolute;left:44.20px;top:773.54px;width:49.37px;height:20.16px;overflow:visible;fill:#000;" viewBox="0 0 49.37 20.16"><text x="0" y="13.86" font-size="12.6" textLength="49.37" lengthAdjust="spacingAndGlyphs">સ્ટોક ઉમેરો</text></svg>
<svg style="left:11px;top:798.6px;width:22px;height:16px" viewBox="0 0 22 16"><rect x="6.500" y="1.500" width="13" height="13" fill="#5fb15a" stroke="#3b7f3a"/><rect x="8" y="3" width="10" height="2" fill="#bfe6b8"/><path d="M8 1.500v13" stroke="#3b7f3a"/><path d="M1 14.500l3-3M1.800 11.200h2.500v2.500" stroke="#3b3d9a" stroke-width="1.100" fill="none"/></svg>
<svg style="position:absolute;left:44.20px;top:797.54px;width:59.56px;height:20.16px;overflow:visible;fill:#000;" viewBox="0 0 59.56 20.16"><text x="0" y="13.86" font-size="12.6" textLength="59.56" lengthAdjust="spacingAndGlyphs">સ્ટોક રજીસ્ટર</text></svg>
<div style="left:186px;top:145px;width:978px;height:23px;background:linear-gradient(#8fb3e3 0,#85a9db 100%);"></div>
<div style="left:186px;top:168px;width:969px;height:672px;background:linear-gradient(#89abd9 0,#7ba0d1 19%,#6d94c8 34%,#5f88be 52%,#5680b7 71%,#5a86c1 85%,#6492d0 100%);"></div>
<div style="left:186px;top:167px;width:969px;height:1px;background:#6d94cb;"></div>
<svg style="left:186px;top:144px;width:340px;height:24px" viewBox="0 0 340 24">
<defs>
<linearGradient id="tb" x1="0" y1="0" x2="0" y2="1"><stop offset="0" stop-color="#d3e4fb"/><stop offset="0.5" stop-color="#b3cef2"/><stop offset="1" stop-color="#98b9e8"/></linearGradient>
<linearGradient id="ta" x1="0" y1="0" x2="0" y2="1"><stop offset="0" stop-color="#fde0a6"/><stop offset="0.45" stop-color="#fbc66c"/><stop offset="1" stop-color="#f8ad3c"/></linearGradient>
</defs>
<path d="M1 23.500V4.500q0-3 3-3H54q3.500 0 5.500 4L68 23.500z" fill="url(#tb)" stroke="#6f97d0" stroke-width="1"/>
<path d="M68.500 23.500V4.500q0-3 3-3H221q3.500 0 5.500 4L235 23.500z" fill="url(#tb)" stroke="#6f97d0" stroke-width="1"/>
<path d="M60 6.500L68.500 23.500" stroke="#6f97d0" fill="none"/>
<path d="M236.500 23.500V4.500q0-3 3-3H311q3.500 0 5.500 4L326 23.500z" fill="url(#ta)" stroke="#d9a24a" stroke-width="1"/>
</svg>
<svg style="left:193px;top:149px;width:14px;height:14px" viewBox="0 0 14 14"><path d="M7 1v12M2.500 3.500h9" stroke="#a39684" stroke-width="1.100" fill="none"/><path d="M0.500 7.500h4M9.500 7.500h4" stroke="#857a6c" stroke-width="1.200" fill="none"/><path d="M5 13h4" stroke="#a39684" stroke-width="1"/></svg>
<div style="top:151.00px;font-size:11.4px;line-height:13.10px;color:#000;white-space:pre;left:216.00px;">Home</div>
<svg style="left:261px;top:149px;width:14px;height:14px" viewBox="0 0 14 14"><path d="M7 1v12M2.500 3.500h9" stroke="#a39684" stroke-width="1.100" fill="none"/><path d="M0.500 7.500h4M9.500 7.500h4" stroke="#857a6c" stroke-width="1.200" fill="none"/><path d="M5 13h4" stroke="#a39684" stroke-width="1"/></svg>
<div style="top:151.00px;font-size:11.4px;line-height:13.10px;color:#000;white-space:pre;left:283.50px;">Year and Account Report</div>
<svg style="left:428px;top:149px;width:14px;height:14px" viewBox="0 0 14 14"><path d="M7 1v12M2.500 3.500h9" stroke="#a39684" stroke-width="1.100" fill="none"/><path d="M0.500 7.500h4M9.500 7.500h4" stroke="#857a6c" stroke-width="1.200" fill="none"/><path d="M5 13h4" stroke="#a39684" stroke-width="1"/></svg>
<svg style="position:absolute;left:450.72px;top:144.79px;width:47.44px;height:22.13px;overflow:visible;fill:#000;" viewBox="0 0 47.44 22.13"><text x="0" y="15.21" font-size="13.83" font-weight="bold" textLength="47.44" lengthAdjust="spacingAndGlyphs">ખાતાવહી</text></svg>
<svg style="left:1153px;top:151px;width:9px;height:9px" viewBox="0 0 9 9"><path d="M1 1l7 7M8 1l-7 7" stroke="#000" stroke-width="1.500"/></svg>
<div style="left:284px;top:184px;width:794px;height:659px;background:#253a5f;"></div>
<div style="left:282px;top:181px;width:794px;height:661px;background:#fff;border:1px solid #000;"></div>
<div style="left:1153px;top:168px;width:1px;height:672px;background:#a9c3ea;"></div>
<div style="left:1154px;top:168px;width:10px;height:672px;background:linear-gradient(#7f9fcf 0,#7796c8 55%,#7f9fd2 100%);"></div>
<div style="left:1155px;top:298.5px;width:10px;height:235px;background:linear-gradient(90deg,#ffffff 0,#eef2f9 50%,#d5dfee 100%);border:1px solid #8fa4c4;border-right:none;border-radius:2px 0 0 2px;"></div>
<div style="left:1158px;top:412px;width:6px;height:1px;background:#7388a8;"></div>
<div style="left:1158px;top:414px;width:6px;height:1px;background:#7388a8;"></div>
<div style="left:1158px;top:416px;width:6px;height:1px;background:#7388a8;"></div>
<div style="left:1158px;top:418px;width:6px;height:1px;background:#7388a8;"></div>
<svg style="left:1156.500px;top:173.500px;width:9px;height:5px" viewBox="0 0 9 5"><path d="M0 5h9L4.500 0z" fill="#3b4c72"/></svg>
<svg style="left:1156.500px;top:819px;width:9px;height:5px" viewBox="0 0 9 5"><path d="M0 0h9L4.500 5z" fill="#3b4c72"/></svg>
<div style="left:0;top:0;width:1164px;height:840px;overflow:hidden">
<svg style="position:absolute;left:498.93px;top:227.82px;width:51.58px;height:36.63px;overflow:visible;fill:#000;" viewBox="0 0 51.58 36.63"><text x="0" y="25.18" font-size="22.89" font-weight="bold" textLength="51.58" lengthAdjust="spacingAndGlyphs">આવક</text></svg>
<svg style="position:absolute;left:560.70px;top:235.45px;width:4.31px;height:24.80px;overflow:visible;fill:#000;" viewBox="0 0 4.31 24.80"><text x="0" y="17.05" font-size="15.5" font-weight="bold">/</text></svg>
<svg style="position:absolute;left:573.92px;top:226.45px;width:47.37px;height:38.61px;overflow:visible;fill:#000;" viewBox="0 0 47.37 38.61"><text x="0" y="26.55" font-size="24.13" font-weight="bold" textLength="47.37" lengthAdjust="spacingAndGlyphs">ખર્ચનું</text></svg>
<svg style="position:absolute;left:631.20px;top:227.33px;width:78.64px;height:37.33px;overflow:visible;fill:#000;" viewBox="0 0 78.64 37.33"><text x="0" y="25.67" font-size="23.33" font-weight="bold" textLength="78.64" lengthAdjust="spacingAndGlyphs">વર્ગીકરણ</text></svg>
<svg style="position:absolute;left:718.87px;top:230.23px;width:6.89px;height:33.12px;overflow:visible;fill:#000;" viewBox="0 0 6.89 33.12"><text x="0" y="22.77" font-size="20.7">(</text></svg>
<svg style="position:absolute;left:735.86px;top:228.43px;width:99.90px;height:35.74px;overflow:visible;fill:#000;" viewBox="0 0 99.90 35.74"><text x="0" y="24.57" font-size="22.33" font-weight="bold" textLength="99.90" lengthAdjust="spacingAndGlyphs">ક્લાસીફાઇડ</text></svg>
<svg style="position:absolute;left:845.72px;top:227.74px;width:64.40px;height:36.74px;overflow:visible;fill:#000;" viewBox="0 0 64.40 36.74"><text x="0" y="25.26" font-size="22.96" font-weight="bold" textLength="64.40" lengthAdjust="spacingAndGlyphs">રજીસ્ટર</text></svg>
<svg style="position:absolute;left:919.28px;top:230.23px;width:6.89px;height:33.12px;overflow:visible;fill:#000;" viewBox="0 0 6.89 33.12"><text x="0" y="22.77" font-size="20.7">)</text></svg>
<svg style="position:absolute;left:931.32px;top:230.23px;width:6.89px;height:33.12px;overflow:visible;fill:#000;" viewBox="0 0 6.89 33.12"><text x="0" y="22.77" font-size="20.7">(</text></svg>
<svg style="position:absolute;left:951.68px;top:227.25px;width:77.83px;height:37.45px;overflow:visible;fill:#000;" viewBox="0 0 77.83 37.45"><text x="0" y="25.75" font-size="23.41" font-weight="bold" textLength="77.83" lengthAdjust="spacingAndGlyphs">ખાતાવહી</text></svg>
<svg style="position:absolute;left:1038.88px;top:230.23px;width:6.89px;height:33.12px;overflow:visible;fill:#000;" viewBox="0 0 6.89 33.12"><text x="0" y="22.77" font-size="20.7">)</text></svg>
<svg style="position:absolute;left:889.59px;top:268.39px;width:93.01px;height:26.34px;overflow:visible;fill:#000;" viewBox="0 0 93.01 26.34"><text x="0" y="18.11" font-size="16.46" textLength="93.01" lengthAdjust="spacingAndGlyphs">નાણાકીય વર્ષ :</text></svg>
<div style="top:274.00px;font-size:14.2px;line-height:16.32px;color:#000;white-space:pre;left:989.80px;font-kerning:none;letter-spacing:-0.119px;">2020-21</div>
<svg style="position:absolute;left:570.89px;top:301.41px;width:269.80px;height:28.50px;overflow:visible;fill:#000;" viewBox="0 0 269.80 28.50"><text x="0" y="19.59" font-size="17.81" textLength="269.80" lengthAdjust="spacingAndGlyphs">એસ એમ સી , સેંગીયાની રાયણ પ્રા શાળા</text><rect x="0" y="20.93" width="269.80" height="1.25"/></svg>
<svg style="position:absolute;left:337.88px;top:343.82px;width:97.25px;height:22.95px;overflow:visible;fill:#111;" viewBox="0 0 97.25 22.95"><text x="0" y="15.78" font-size="14.34" textLength="97.25" lengthAdjust="spacingAndGlyphs">સદર ( હેડનું નામ):-</text></svg>
<svg style="position:absolute;left:466.60px;top:341.50px;width:103.79px;height:32.73px;overflow:visible;fill:#000;" viewBox="0 0 103.79 32.73"><text x="0" y="22.50" font-size="20.45" font-weight="bold" textLength="103.79" lengthAdjust="spacingAndGlyphs">શ્રી પદર ખાતે</text></svg>
<div style="left:336.5px;top:402px;width:709.9px;height:1px;background:#172f5c;"></div>
<div style="left:406.7px;top:432px;width:111.9px;height:1px;background:#172f5c;"></div>
<div style="left:336.5px;top:462px;width:709.9px;height:1px;background:#172f5c;"></div>
<div style="left:336.5px;top:496.5px;width:709.9px;height:1px;background:#172f5c;"></div>
<div style="left:336.5px;top:523px;width:709.9px;height:1px;background:#172f5c;"></div>
<div style="left:336px;top:402px;width:1px;height:121px;background:#172f5c;"></div>
<div style="left:406px;top:402px;width:1px;height:94.5px;background:#172f5c;"></div>
<div style="left:445px;top:432px;width:1px;height:62.5px;background:#000;"></div>
<div style="left:518px;top:402px;width:1px;height:94.5px;background:#172f5c;"></div>
<div style="left:614px;top:402px;width:1px;height:94.5px;background:#172f5c;"></div>
<div style="left:681px;top:402px;width:1px;height:94.5px;background:#172f5c;"></div>
<div style="left:784px;top:402px;width:1px;height:94.5px;background:#172f5c;"></div>
<div style="left:846px;top:402px;width:1px;height:121px;background:#172f5c;"></div>
<div style="left:945px;top:402px;width:1px;height:121px;background:#172f5c;"></div>
<div style="left:1045px;top:402px;width:1px;height:121px;background:#172f5c;"></div>
<svg style="position:absolute;left:353.56px;top:420.72px;width:34.65px;height:23.68px;overflow:visible;fill:#000;" viewBox="0 0 34.65 23.68"><text x="0" y="16.28" font-size="14.8" textLength="34.65" lengthAdjust="spacingAndGlyphs">તારીખ</text></svg>
<svg style="position:absolute;left:447.28px;top:406.22px;width:30.31px;height:23.68px;overflow:visible;fill:#000;" viewBox="0 0 30.31 23.68"><text x="0" y="16.28" font-size="14.8" textLength="30.31" lengthAdjust="spacingAndGlyphs">પહોંચ</text></svg>
<svg style="position:absolute;left:421.58px;top:431.22px;width:8.04px;height:23.68px;overflow:visible;fill:#000;" viewBox="0 0 8.04 23.68"><text x="0" y="16.28" font-size="14.8" textLength="8.04" lengthAdjust="spacingAndGlyphs">નં</text></svg>
<svg style="position:absolute;left:463.91px;top:431.22px;width:34.65px;height:23.68px;overflow:visible;fill:#000;" viewBox="0 0 34.65 23.68"><text x="0" y="16.28" font-size="14.8" textLength="34.65" lengthAdjust="spacingAndGlyphs">તારીખ</text></svg>
<svg style="position:absolute;left:550.05px;top:406.22px;width:32.80px;height:23.68px;overflow:visible;fill:#000;" viewBox="0 0 32.80 23.68"><text x="0" y="16.28" font-size="14.8" textLength="32.80" lengthAdjust="spacingAndGlyphs">આવક</text></svg>
<svg style="position:absolute;left:547.71px;top:432.22px;width:44.25px;height:23.68px;overflow:visible;fill:#000;" viewBox="0 0 44.25 23.68"><text x="0" y="16.28" font-size="14.8" textLength="44.25" lengthAdjust="spacingAndGlyphs">રકમ રૂ.</text></svg>
<svg style="position:absolute;left:635.44px;top:420.72px;width:24.60px;height:23.68px;overflow:visible;fill:#000;" viewBox="0 0 24.60 23.68"><text x="0" y="16.28" font-size="14.8" textLength="24.60" lengthAdjust="spacingAndGlyphs">વા.નં</text></svg>
<svg style="position:absolute;left:723.61px;top:406.22px;width:32.53px;height:23.68px;overflow:visible;fill:#000;" viewBox="0 0 32.53 23.68"><text x="0" y="16.28" font-size="14.8" textLength="32.53" lengthAdjust="spacingAndGlyphs">ખર્ચની</text></svg>
<svg style="position:absolute;left:719.81px;top:432.22px;width:44.25px;height:23.68px;overflow:visible;fill:#000;" viewBox="0 0 44.25 23.68"><text x="0" y="16.28" font-size="14.8" textLength="44.25" lengthAdjust="spacingAndGlyphs">રકમ રૂ.</text></svg>
<svg style="position:absolute;left:800.57px;top:406.22px;width:37.30px;height:23.68px;overflow:visible;fill:#000;" viewBox="0 0 37.30 23.68"><text x="0" y="16.28" font-size="14.8" textLength="37.30" lengthAdjust="spacingAndGlyphs">કેશબુક</text></svg>
<svg style="position:absolute;left:807.39px;top:432.22px;width:24.60px;height:23.68px;overflow:visible;fill:#000;" viewBox="0 0 24.60 23.68"><text x="0" y="16.28" font-size="14.8" textLength="24.60" lengthAdjust="spacingAndGlyphs">પા.નં</text></svg>
<svg style="position:absolute;left:871.08px;top:420.72px;width:48.93px;height:23.68px;overflow:visible;fill:#000;" viewBox="0 0 48.93 23.68"><text x="0" y="16.28" font-size="14.8" textLength="48.93" lengthAdjust="spacingAndGlyphs">જમાબાકી</text></svg>
<svg style="position:absolute;left:964.74px;top:421.27px;width:53.91px;height:22.88px;overflow:visible;fill:#000;" viewBox="0 0 53.91 22.88"><text x="0" y="15.73" font-size="14.3" textLength="53.91" lengthAdjust="spacingAndGlyphs">ઉધારબાકી</text></svg>
<svg style="position:absolute;left:368.73px;top:469.15px;width:6.22px;height:21.60px;overflow:visible;fill:#000;" viewBox="0 0 6.22 21.60"><text x="0" y="14.85" font-size="13.5">૧</text></svg>
<svg style="position:absolute;left:422.74px;top:469.15px;width:6.26px;height:21.60px;overflow:visible;fill:#000;" viewBox="0 0 6.26 21.60"><text x="0" y="14.85" font-size="13.5">૨</text></svg>
<svg style="position:absolute;left:478.71px;top:469.15px;width:6.62px;height:21.60px;overflow:visible;fill:#000;" viewBox="0 0 6.62 21.60"><text x="0" y="14.85" font-size="13.5">૩</text></svg>
<svg style="position:absolute;left:562.84px;top:469.15px;width:7.17px;height:21.60px;overflow:visible;fill:#000;" viewBox="0 0 7.17 21.60"><text x="0" y="14.85" font-size="13.5">૪</text></svg>
<svg style="position:absolute;left:644.80px;top:469.15px;width:7.65px;height:21.60px;overflow:visible;fill:#000;" viewBox="0 0 7.65 21.60"><text x="0" y="14.85" font-size="13.5">૫</text></svg>
<svg style="position:absolute;left:729.63px;top:469.15px;width:6.83px;height:21.60px;overflow:visible;fill:#000;" viewBox="0 0 6.83 21.60"><text x="0" y="14.85" font-size="13.5">૬</text></svg>
<svg style="position:absolute;left:811.50px;top:469.15px;width:8.07px;height:21.60px;overflow:visible;fill:#000;" viewBox="0 0 8.07 21.60"><text x="0" y="14.85" font-size="13.5">૭</text></svg>
<svg style="position:absolute;left:892.25px;top:469.15px;width:6.70px;height:21.60px;overflow:visible;fill:#000;" viewBox="0 0 6.70 21.60"><text x="0" y="14.85" font-size="13.5">૮</text></svg>
<svg style="position:absolute;left:990.95px;top:469.15px;width:7.96px;height:21.60px;overflow:visible;fill:#000;" viewBox="0 0 7.96 21.60"><text x="0" y="14.85" font-size="13.5">૯</text></svg>
<svg style="position:absolute;left:748.48px;top:501.13px;width:92.82px;height:23.81px;overflow:visible;fill:#000;" viewBox="0 0 92.82 23.81"><text x="0" y="16.37" font-size="14.88" textLength="92.82" lengthAdjust="spacingAndGlyphs">શ્રી ઉઘડતિ સિલક</text></svg>
<div style="top:506.00px;font-size:14.67px;line-height:16.86px;color:#000;white-space:pre;right:226.00px;text-align:right;">4,314.00</div>
<div style="left:335px;top:525px;width:2px;height:317px;background:#000;"></div>
<div style="left:405px;top:525px;width:2px;height:317px;background:#000;"></div>
<div style="left:443.6px;top:525px;width:2px;height:317px;background:#000;"></div>
<div style="left:517.4px;top:525px;width:2px;height:317px;background:#000;"></div>
<div style="left:614px;top:525px;width:2px;height:317px;background:#000;"></div>
<div style="left:681px;top:525px;width:2px;height:317px;background:#000;"></div>
<div style="left:784px;top:525px;width:2px;height:317px;background:#000;"></div>
<div style="left:845px;top:525px;width:2px;height:317px;background:#000;"></div>
<div style="left:944px;top:525px;width:2px;height:317px;background:#000;"></div>
<div style="left:1044px;top:525px;width:2px;height:317px;background:#000;"></div>
<div style="left:335px;top:557.8px;width:711.5px;height:2px;background:#000;"></div>
<div style="left:335px;top:591.55px;width:711.5px;height:2px;background:#000;"></div>
<div style="left:335px;top:625.3px;width:711.5px;height:2px;background:#000;"></div>
<div style="left:335px;top:659.05px;width:711.5px;height:2px;background:#000;"></div>
<div style="left:335px;top:692.8px;width:711.5px;height:2px;background:#000;"></div>
<div style="left:335px;top:726.55px;width:711.5px;height:2px;background:#000;"></div>
<div style="left:335px;top:760.3px;width:711.5px;height:2px;background:#000;"></div>
<div style="left:335px;top:794.05px;width:711.5px;height:2px;background:#000;"></div>
<div style="left:335px;top:827.8px;width:711.5px;height:2px;background:#000;"></div>
<div style="left:335px;top:861.55px;width:711.5px;height:2px;background:#000;"></div>
<div style="top:533.00px;font-size:14.67px;line-height:16.86px;color:#000;white-space:pre;left:342.50px;">07-04-20</div>
<div style="top:535.00px;font-size:14.67px;line-height:16.86px;color:#000;white-space:pre;left:450.50px;">07-04-20</div>
<div style="top:533.00px;font-size:14.67px;line-height:16.86px;color:#000;white-space:pre;right:557.50px;text-align:right;">2,655.00</div>
<div style="top:533.00px;font-size:14.67px;line-height:16.86px;color:#000;white-space:pre;right:389.50px;text-align:right;">0.00</div>
<div style="top:535.00px;font-size:14.67px;line-height:16.86px;color:#000;white-space:pre;left:613.00px;width:400px;text-align:center;">1</div>
<div style="top:533.00px;font-size:14.67px;line-height:16.86px;color:#000;white-space:pre;right:225.00px;text-align:right;">6,969.00</div>
<div style="top:567.00px;font-size:14.67px;line-height:16.86px;color:#000;white-space:pre;left:342.50px;">18-04-20</div>
<div style="top:569.00px;font-size:14.67px;line-height:16.86px;color:#000;white-space:pre;left:450.50px;">18-04-20</div>
<div style="top:567.00px;font-size:14.67px;line-height:16.86px;color:#000;white-space:pre;right:557.50px;text-align:right;">2,400.00</div>
<div style="top:567.00px;font-size:14.67px;line-height:16.86px;color:#000;white-space:pre;right:389.50px;text-align:right;">0.00</div>
<div style="top:569.00px;font-size:14.67px;line-height:16.86px;color:#000;white-space:pre;left:613.00px;width:400px;text-align:center;">3</div>
<div style="top:567.00px;font-size:14.67px;line-height:16.86px;color:#000;white-space:pre;right:225.00px;text-align:right;">9,369.00</div>
<div style="top:600.00px;font-size:14.67px;line-height:16.86px;color:#000;white-space:pre;left:342.50px;">23-05-20</div>
<div style="top:603.00px;font-size:14.67px;line-height:16.86px;color:#000;white-space:pre;left:450.50px;">23-05-20</div>
<div style="top:600.00px;font-size:14.67px;line-height:16.86px;color:#000;white-space:pre;right:557.50px;text-align:right;">3,350.00</div>
<div style="top:600.00px;font-size:14.67px;line-height:16.86px;color:#000;white-space:pre;right:389.50px;text-align:right;">0.00</div>
<div style="top:603.00px;font-size:14.67px;line-height:16.86px;color:#000;white-space:pre;left:613.00px;width:400px;text-align:center;">5</div>
<div style="top:600.00px;font-size:14.67px;line-height:16.86px;color:#000;white-space:pre;right:225.00px;text-align:right;">12,719.00</div>
<div style="top:634.00px;font-size:14.67px;line-height:16.86px;color:#000;white-space:pre;left:342.50px;">10-07-20</div>
<div style="top:636.00px;font-size:14.67px;line-height:16.86px;color:#000;white-space:pre;left:450.50px;">10-07-20</div>
<div style="top:634.00px;font-size:14.67px;line-height:16.86px;color:#000;white-space:pre;right:557.50px;text-align:right;">3,840.00</div>
<div style="top:634.00px;font-size:14.67px;line-height:16.86px;color:#000;white-space:pre;right:389.50px;text-align:right;">0.00</div>
<div style="top:636.00px;font-size:14.67px;line-height:16.86px;color:#000;white-space:pre;left:613.00px;width:400px;text-align:center;">7</div>
<div style="top:634.00px;font-size:14.67px;line-height:16.86px;color:#000;white-space:pre;right:225.00px;text-align:right;">16,559.00</div>
<div style="top:668.00px;font-size:14.67px;line-height:16.86px;color:#000;white-space:pre;left:342.50px;">30-07-20</div>
<div style="top:670.00px;font-size:14.67px;line-height:16.86px;color:#000;white-space:pre;left:450.50px;">30-07-20</div>
<div style="top:668.00px;font-size:14.67px;line-height:16.86px;color:#000;white-space:pre;right:557.50px;text-align:right;">5,010.00</div>
<div style="top:668.00px;font-size:14.67px;line-height:16.86px;color:#000;white-space:pre;right:389.50px;text-align:right;">0.00</div>
<div style="top:670.00px;font-size:14.67px;line-height:16.86px;color:#000;white-space:pre;left:613.00px;width:400px;text-align:center;">8</div>
<div style="top:668.00px;font-size:14.67px;line-height:16.86px;color:#000;white-space:pre;right:225.00px;text-align:right;">21,569.00</div>
<div style="top:702.00px;font-size:14.67px;line-height:16.86px;color:#000;white-space:pre;left:342.50px;">10-08-20</div>
<div style="top:704.00px;font-size:14.67px;line-height:16.86px;color:#000;white-space:pre;left:450.50px;">10-08-20</div>
<div style="top:702.00px;font-size:14.67px;line-height:16.86px;color:#000;white-space:pre;right:557.50px;text-align:right;">1,480.00</div>
<div style="top:702.00px;font-size:14.67px;line-height:16.86px;color:#000;white-space:pre;right:389.50px;text-align:right;">0.00</div>
<div style="top:704.00px;font-size:14.67px;line-height:16.86px;color:#000;white-space:pre;left:613.00px;width:400px;text-align:center;">8</div>
<div style="top:702.00px;font-size:14.67px;line-height:16.86px;color:#000;white-space:pre;right:225.00px;text-align:right;">23,049.00</div>
<div style="top:735.00px;font-size:14.67px;line-height:16.86px;color:#000;white-space:pre;left:342.50px;">12-09-20</div>
<div style="top:738.00px;font-size:14.67px;line-height:16.86px;color:#000;white-space:pre;left:450.50px;">12-09-20</div>
<div style="top:735.00px;font-size:14.67px;line-height:16.86px;color:#000;white-space:pre;right:557.50px;text-align:right;">1,525.00</div>
<div style="top:735.00px;font-size:14.67px;line-height:16.86px;color:#000;white-space:pre;right:389.50px;text-align:right;">0.00</div>
<div style="top:738.00px;font-size:14.67px;line-height:16.86px;color:#000;white-space:pre;left:613.00px;width:400px;text-align:center;">9</div>
<div style="top:735.00px;font-size:14.67px;line-height:16.86px;color:#000;white-space:pre;right:225.00px;text-align:right;">24,574.00</div>
<div style="top:769.00px;font-size:14.67px;line-height:16.86px;color:#000;white-space:pre;left:342.50px;">28-09-20</div>
<div style="top:771.00px;font-size:14.67px;line-height:16.86px;color:#000;white-space:pre;left:450.50px;">28-09-20</div>
<div style="top:769.00px;font-size:14.67px;line-height:16.86px;color:#000;white-space:pre;right:557.50px;text-align:right;">1,358.00</div>
<div style="top:769.00px;font-size:14.67px;line-height:16.86px;color:#000;white-space:pre;right:389.50px;text-align:right;">0.00</div>
<div style="top:771.00px;font-size:14.67px;line-height:16.86px;color:#000;white-space:pre;left:613.00px;width:400px;text-align:center;">10</div>
<div style="top:769.00px;font-size:14.67px;line-height:16.86px;color:#000;white-space:pre;right:225.00px;text-align:right;">25,932.00</div>
<div style="top:803.00px;font-size:14.67px;line-height:16.86px;color:#000;white-space:pre;left:342.50px;">14-10-20</div>
<div style="top:805.00px;font-size:14.67px;line-height:16.86px;color:#000;white-space:pre;left:450.50px;">14-10-20</div>
<div style="top:803.00px;font-size:14.67px;line-height:16.86px;color:#000;white-space:pre;right:557.50px;text-align:right;">2,200.00</div>
<div style="top:803.00px;font-size:14.67px;line-height:16.86px;color:#000;white-space:pre;right:389.50px;text-align:right;">0.00</div>
<div style="top:805.00px;font-size:14.67px;line-height:16.86px;color:#000;white-space:pre;left:613.00px;width:400px;text-align:center;">10</div>
<div style="top:803.00px;font-size:14.67px;line-height:16.86px;color:#000;white-space:pre;right:225.00px;text-align:right;">28,132.00</div>
<div style="top:837.00px;font-size:14.67px;line-height:16.86px;color:#000;white-space:pre;left:342.50px;">20-10-20</div>
<div style="top:837.00px;font-size:14.67px;line-height:16.86px;color:#000;white-space:pre;left:450.50px;">20-10-20</div>
<div style="top:837.00px;font-size:14.67px;line-height:16.86px;color:#000;white-space:pre;right:557.50px;text-align:right;">1,405.00</div>
<div style="top:837.00px;font-size:14.67px;line-height:16.86px;color:#000;white-space:pre;right:389.50px;text-align:right;">0.00</div>
<div style="top:839.00px;font-size:14.67px;line-height:16.86px;color:#000;white-space:pre;left:613.00px;width:400px;text-align:center;">11</div>
<div style="top:837.00px;font-size:14.67px;line-height:16.86px;color:#000;white-space:pre;right:225.00px;text-align:right;">29,537.00</div>
</div>
<div style="left:186px;top:840px;width:978px;height:15px;background:linear-gradient(#9dbde9 0,#8db0e1 100%);border-top:1px solid #7296cc;"></div>
<div style="left:187px;top:841px;width:259px;height:14px;background:linear-gradient(#e8f1fd 0,#c8dcf6 100%);"></div>
<div style="top:844.00px;font-size:11.4px;line-height:13.10px;color:#15428b;white-space:pre;left:190.50px;">Page:</div>
<svg style="left:224px;top:844px;width:30px;height:9px" viewBox="0 0 30 9"><path d="M2.500 0.500v8" stroke="#9fb6d8" stroke-width="1.200"/><path d="M8 0.500v8L3.500 4.500z" fill="#9fb6d8"/><path d="M25 0.500v8L20.500 4.500z" fill="#9fb6d8"/></svg>
<div style="left:255.5px;top:841px;width:48px;height:14px;background:#fff;border:1px solid #9ab4d9;"></div>
<div style="top:844.00px;font-size:11.4px;line-height:13.10px;color:#000;white-space:pre;left:258.00px;">1</div>
<svg style="left:311px;top:844px;width:50px;height:9px" viewBox="0 0 50 9"><path d="M2 0.500v8L6.500 4.500z" fill="#15428b"/><path d="M18 0.500v8L22.500 4.500z" fill="#15428b"/><path d="M24 0.500v8" stroke="#15428b" stroke-width="1.200"/><path d="M34 0.500v8L38 4.500z" fill="#b5c6de"/><path d="M41 2l3 5M44 2l-3 5M39.500 4.500h6" stroke="#ead9b0" stroke-width="1"/></svg>
<div style="left:360.5px;top:841px;width:1px;height:14px;background:#9ab4d9;"></div>
<svg style="left:369px;top:843px;width:14px;height:12px" viewBox="0 0 14 12"><path d="M1 1h12L8.500 6.500V12L5.500 10V6.500z" fill="#b4bdcb" stroke="#8593a8" stroke-width="1"/></svg>
<div style="top:844.00px;font-size:11.4px;line-height:13.10px;color:#a6a9ad;white-space:pre;left:388.00px;">Filtered</div>
<div style="left:436.5px;top:841px;width:1px;height:14px;background:#9ab4d9;"></div>
<div style="left:438px;top:841px;width:8px;height:14px;background:linear-gradient(#e8f1fd 0,#c8dcf6 100%);"></div>
<div style="left:446px;top:841px;width:709px;height:14px;background:linear-gradient(#7f9fd2 0,#7798cd 100%);"></div>
<svg style="left:451px;top:843px;width:6px;height:10px" viewBox="0 0 6 10"><path d="M5.500 0.500v9L0.500 5z" fill="#35507e"/></svg>
<svg style="left:1143px;top:843px;width:6px;height:10px" viewBox="0 0 6 10"><path d="M0.500 0.500v9L5.500 5z" fill="#35507e"/></svg>
<div style="left:609px;top:841.5px;width:354px;height:13.5px;background:linear-gradient(#ffffff 0,#e6edf8 50%,#cddbee 100%);border:1px solid #8fa9cd;border-radius:2px;"></div>
<div style="left:783px;top:845px;width:1px;height:7px;background:#7388a8;"></div>
<div style="left:785px;top:845px;width:1px;height:7px;background:#7388a8;"></div>
<div style="left:787px;top:845px;width:1px;height:7px;background:#7388a8;"></div>
<div style="left:789px;top:845px;width:1px;height:7px;background:#7388a8;"></div>
<div style="left:1155px;top:840px;width:9px;height:15px;background:#9bbbe8;"></div>
</div></body></html>
